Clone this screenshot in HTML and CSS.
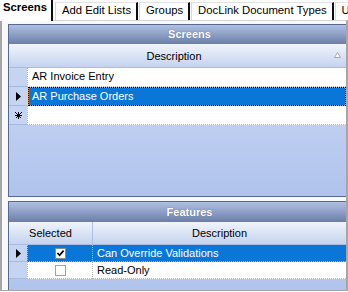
FILE: index.html
```
<!DOCTYPE html>
<html>
<head>
<meta charset="utf-8">
<link rel="stylesheet" href="styles.css">
</head>
<body>
<div class="tabs">
  <div class="tab active">Screens</div>
  <div class="tab">Add Edit Lists</div>
  <div class="tab">Groups</div>
  <div class="tab">DocLink Document Types</div>
  <div class="tab">U</div>
</div>
<div class="panel">
  <div class="box box-screens">
    <div class="caption">Screens</div>
    <div class="colhead">
      <div class="hcell hcell-desc">Description
        <svg class="sort" width="7" height="6" viewBox="0 0 7 6"><polygon points="3.5,0.5 6.5,5.5 0.5,5.5" fill="#fff" stroke="#a8a8a8" stroke-width="1"/></svg>
      </div>
    </div>
    <div class="row">
      <div class="rowsel"></div>
      <div class="cell">AR Invoice Entry</div>
    </div>
    <div class="row current">
      <div class="rowsel"><svg width="5" height="9" viewBox="0 0 5 9"><polygon points="0,0 5,4.5 0,9" fill="#000"/></svg></div>
      <div class="cell focus">AR Purchase Orders</div>
    </div>
    <div class="row newrow">
      <div class="rowsel"><svg width="7" height="7" viewBox="0 0 7 7" shape-rendering="crispEdges"><path d="M3.5 0V7M0 3.5H7M0.5 0.5L6.5 6.5M6.5 0.5L0.5 6.5" stroke="#000" stroke-width="1" fill="none"/></svg></div>
      <div class="cell"></div>
    </div>
    <div class="empty"></div>
  </div>
  <div class="box box-features">
    <div class="caption">Features</div>
    <div class="colhead">
      <div class="hcell hcell-sel">Selected</div>
      <div class="hcell hcell-fdesc">Description</div>
    </div>
    <div class="row frow current">
      <div class="rowsel"><svg width="5" height="9" viewBox="0 0 5 9"><polygon points="0,0 5,4.5 0,9" fill="#000"/></svg></div>
      <div class="cell selcell"><span class="chk checked"><svg width="9" height="9" viewBox="0 0 9 9"><path d="M1.5 4L3.6 6.3L7.6 1.6" stroke="#000" stroke-width="1.7" fill="none"/></svg></span></div>
      <div class="cell desccell">Can Override Validations</div>
    </div>
    <div class="row frow">
      <div class="rowsel"></div>
      <div class="cell selcell"><span class="chk"></span></div>
      <div class="cell desccell">Read-Only</div>
    </div>
    <div class="empty"></div>
  </div>
</div>
</body>
</html>
```
FILE: styles.css
```
* { box-sizing: border-box; margin: 0; padding: 0; }
html, body { width: 348px; height: 292px; overflow: hidden; }
body {
  background: #fdfdfe;
  font-family: "Liberation Sans", Arial, sans-serif;
  font-size: 11px;
  color: #000;
  display: flex;
  flex-direction: column;
}
.tabs {
  flex: none;
  height: 20px;
  display: flex;
  align-items: flex-start;
  white-space: nowrap;
  position: relative;
  z-index: 1;
  background: #fcfcfd;
  font-size: 11.3px;
}
.tab {
  flex: none;
  margin-top: 2px;
  margin-left: 1px;
  height: 18px;
  padding: 1px 5px 0 6px;
  line-height: 12px;
  background: #fff;
  border-left: 1px solid #d8d8d8;
  border-top: 1px solid #e2e2e2;
  border-right: 2px solid #0c0c18;
}
.tab.active {
  margin-top: 0;
  margin-left: 0;
  margin-right: 1px;
  height: 21px;
  padding: 1px 4px 0 3px;
  font-weight: bold;
  border-left: none;
  border-top: none;
  line-height: 13px;
}
.panel {
  flex: none;
  height: 271px;
  border: 1px solid #a6a6a6;
  border-top-color: #d4d4d4;
  border-left-width: 2px;
  border-right-width: 2px;
  background: #f7f9fd;
  padding: 3px 0 0 6px;
  overflow: hidden;
  display: flex;
  flex-direction: column;
  gap: 4px;
}
.box {
  width: 338px;
  flex: none;
  display: flex;
  flex-direction: column;
  border: 1px solid #56698f;
  border-right: none;
  background: linear-gradient(#d2def6, #afc3ec);
}
.box-screens { height: 173px; }
.box-features { flex: 1; border-bottom: none; }
.caption {
  flex: none;
  height: 19px;
  line-height: 19px;
  padding-left: 24px;
  text-align: center;
  color: #fff;
  font-weight: bold;
  background: linear-gradient(#b0c0e4, #6a7ea7);
  text-shadow: 0 0 1px #4a5a82;
}
.box-features .caption { height: 20px; line-height: 20px; }
.colhead {
  flex: none;
  display: flex;
  height: 24px;
  background: linear-gradient(#f0f4fc, #c5d3ee);
  border-bottom: 1px solid #a9bbe0;
}
.box-features .colhead { height: 23px; }
.hcell {
  display: flex;
  align-items: center;
  justify-content: center;
  position: relative;
}
.hcell-desc { flex: 1; padding-right: 7px; }
.sort { position: absolute; right: 5px; top: 8px; }
.hcell-sel { width: 84px; flex: none; border-right: 1px solid #aebfe2; }
.hcell-fdesc { flex: 1; }
.row {
  flex: none;
  display: flex;
  height: 19px;
}
.frow { height: 17px; }
.rowsel {
  flex: none;
  width: 18px;
  background: #c5d4f1;
  border-bottom: 1px solid #a6b9e2;
  display: flex;
  align-items: center;
  justify-content: center;
}
.cell {
  flex: 1;
  background: #fff;
  border-left: 1px dotted #b4b4b4;
  border-bottom: 1px dotted #b4b4b4;
  padding-left: 4px;
  line-height: 17px;
  white-space: nowrap;
  overflow: hidden;
}
.frow .cell { line-height: 16px; }
.current .cell {
  background: #0a77d8;
  color: #fff;
}
.cell.focus {
  border: 1px solid #ff9418;
  outline: 1px dotted #000;
  outline-offset: -1px;
  padding-left: 3px;
  margin-left: 1px;
  line-height: 17px;
}
.selcell {
  flex: none;
  width: 65px;
  padding-left: 0;
  display: flex;
  align-items: center;
  justify-content: center;
}
.chk {
  display: block;
  width: 11px;
  height: 11px;
  border: 1px solid #a2a2a2;
  background: #fff;
}
.chk.checked { border-color: #8a8a8a; }
.chk svg { display: block; }
.empty { flex: 1; }
```
